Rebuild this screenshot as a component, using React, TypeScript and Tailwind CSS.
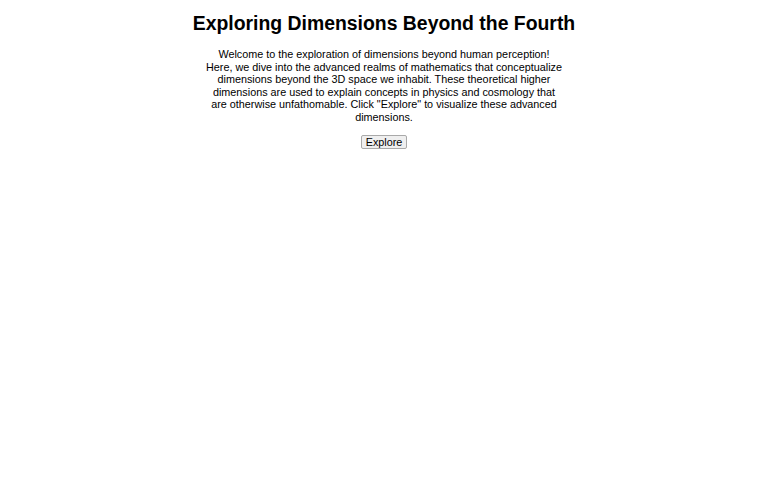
export default function App() {
  return (
    <div className="min-h-[480px] bg-white text-center text-black" style={{ fontFamily: '"Liberation Sans", Arial, sans-serif' }}>
      <h1 className="pt-[12px] text-[19.4px] font-bold leading-[22px]">Exploring Dimensions Beyond the Fourth</h1>
      <p className="mx-auto mt-[14px] max-w-[358px] text-[10.8px] leading-[12.6px]">
        Welcome to the exploration of dimensions beyond human perception! Here, we dive into the advanced realms of mathematics that conceptualize dimensions beyond the 3D space we inhabit. These theoretical higher dimensions are used to explain concepts in physics and cosmology that are otherwise unfathomable. Click "Explore" to visualize these advanced dimensions.
      </p>
      <button className="mt-[11px] rounded-[2px] border border-[#a9a9a9] bg-[#efefef] px-[3.5px] text-[10.8px] leading-[12px]">Explore</button>
    </div>
  );
}
